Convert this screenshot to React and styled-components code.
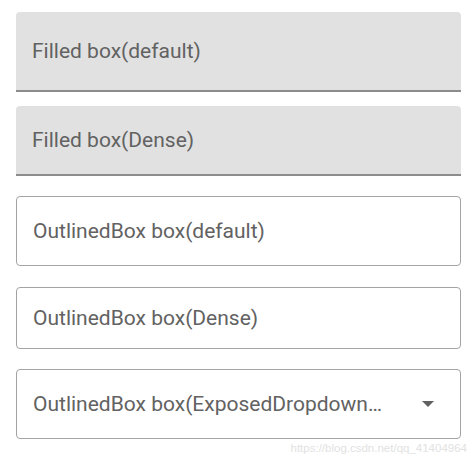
import React from 'react'
import styled, { createGlobalStyle } from 'styled-components'

const GlobalStyle = createGlobalStyle`
    html, body {
        margin: 0;
        padding: 0;
        background: #ffffff;
    }
    body {
        font-family: Roboto, "Noto Sans", sans-serif;
    }
`;

const App = () => {
    return(
        <Page>
            <GlobalStyle />
            <FilledBox height={80}>
                <Label>Filled box(default)</Label>
            </FilledBox>
            <FilledBox height={70} top={14}>
                <Label>Filled box(Dense)</Label>
            </FilledBox>
            <OutlinedBox height={70} top={20}>
                <Label>OutlinedBox box(default)</Label>
            </OutlinedBox>
            <OutlinedBox height={62} top={21}>
                <Label>OutlinedBox box(Dense)</Label>
            </OutlinedBox>
            <OutlinedBox height={70} top={20}>
                <Label>OutlinedBox box(ExposedDropdown…</Label>
                <Arrow viewBox='0 0 12 6'>
                    <path d='M0 0 L12 0 L6 6 Z' fill='#616161' />
                </Arrow>
            </OutlinedBox>
            <Watermark>https://blog.csdn.net/qq_41404964</Watermark>
        </Page>
    )
}

export default App



//PAGE
const Page = styled.div`
    width: 474px;
    height: 463px;
    padding: 12px 13px 0 16px;
    box-sizing: border-box;
    display: flex;
    flex-direction: column;
    overflow: hidden;
`;


//FILLED BOX
const FilledBox = styled.div`
    height: ${p => p.height}px;
    margin-top: ${p => p.top || 0}px;
    box-sizing: border-box;
    background: #e1e1e1;
    border-radius: 4px 4px 0 0;
    border-bottom: 2px solid #8c8c8c;
    padding: 0 16px;
    display: flex;
    align-items: center;
`;


//OUTLINED BOX
const OutlinedBox = styled.div`
    height: ${p => p.height}px;
    margin-top: ${p => p.top || 0}px;
    box-sizing: border-box;
    border: 1.5px solid #a3a3a3;
    border-radius: 4px;
    padding: 0 16px;
    display: flex;
    align-items: center;
    justify-content: space-between;
`;


//LABEL
const Label = styled.span`
    font-size: 21px;
    color: #626262;
    white-space: nowrap;
`;


//DROPDOWN ARROW
const Arrow = styled.svg`
    width: 12px;
    height: 6px;
    margin-right: 10px;
`;


//WATERMARK
const Watermark = styled.div`
    align-self: flex-end;
    margin-top: 3px;
    margin-right: -6px;
    font-size: 11.5px;
    color: #e2e2e2;
    font-family: Arial, "Liberation Sans", sans-serif;
`;
